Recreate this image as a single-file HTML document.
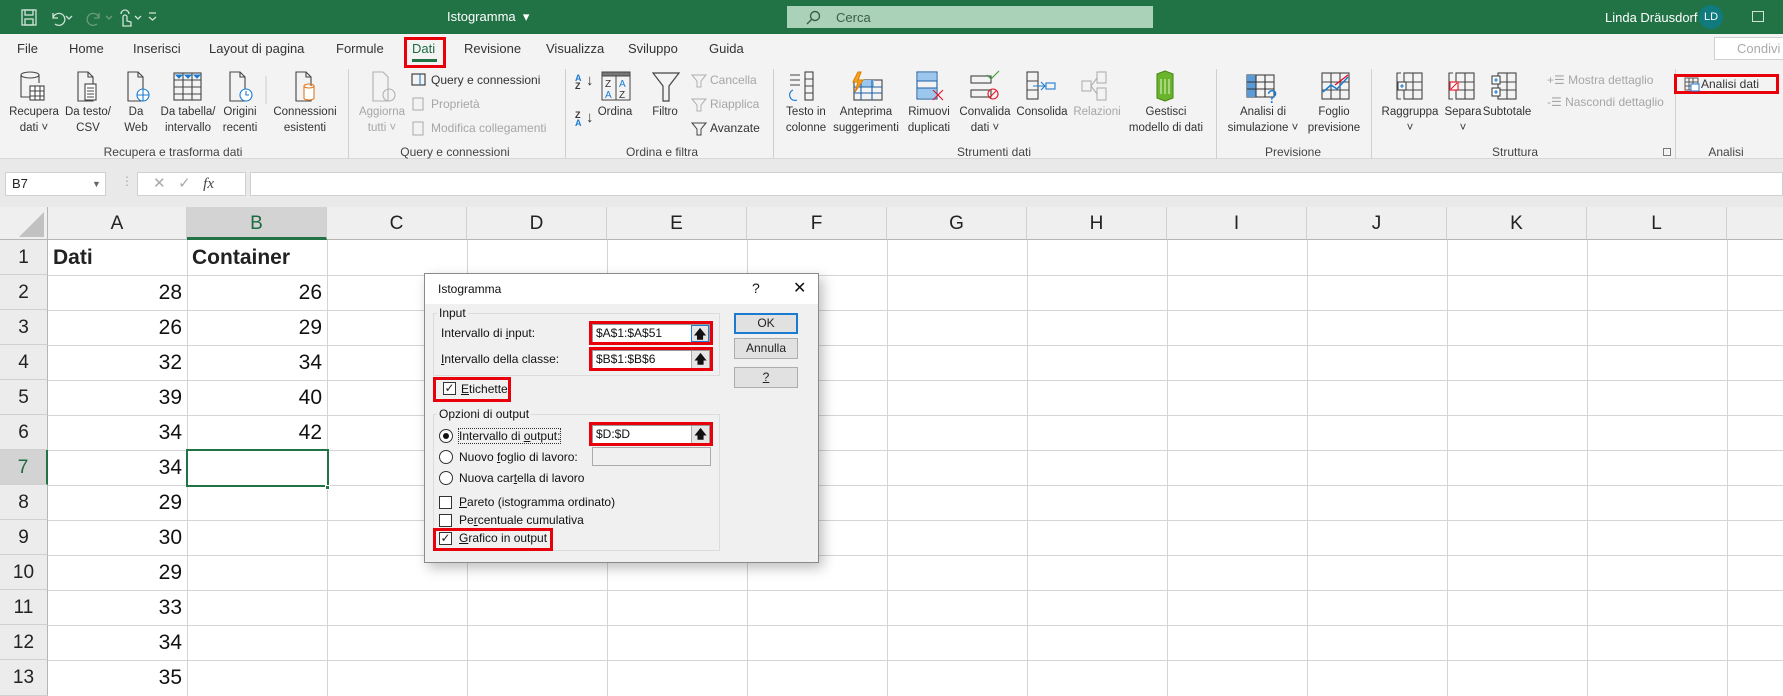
<!DOCTYPE html>
<html><head><meta charset="utf-8"><style>
*{margin:0;padding:0;box-sizing:border-box}
body{width:1783px;height:696px;overflow:hidden;position:relative;background:#fff;font-family:"Liberation Sans",sans-serif;color:#222}
.a{position:absolute;white-space:nowrap}
.tb{background:#217346;left:0;top:0;width:1783px;height:34px}
.tab{font-size:13px;color:#333;top:41px}
.rib{background:#f3f3f3;left:0;top:34px;width:1783px;height:125px;border-bottom:1px solid #d8d8d8;box-shadow:0 2px 3px rgba(0,0,0,.12)}
.lbl{font-size:11.5px;text-align:center;line-height:16px;color:#333;top:104px;transform:translateX(-50%)}
.grp{font-size:12px;color:#444;top:145px;transform:translateX(-50%)}
.sep{width:1px;background:#d0d0d0;top:69px;height:90px}
.sm{font-size:12px;color:#333}
.g{color:#a6a6a6}
.ico{position:absolute}
.fb{left:0;top:159px;width:1783px;height:48px;background:#e9e9e9}
.ch{top:207px;height:33px;background:#efefef;border-right:1px solid #d0d0d0;border-bottom:1px solid #b5b5b5;font-size:19px;text-align:center;line-height:33px;color:#222}
.rh{left:0;width:48px;height:35px;background:#ececec;border-bottom:1px solid #d0d0d0;border-right:1px solid #b5b5b5;font-size:19px;text-align:center;line-height:35px;color:#222}
.vl{top:240px;width:1px;height:456px;background:#d4d4d4}
.hl{left:48px;width:1735px;height:1px;background:#d4d4d4}
.num{font-size:21px;text-align:right;width:130px;line-height:35px;color:#111}
.dlg{left:424px;top:273px;width:395px;height:290px;background:#f0f0f0;border:1px solid #8a8a8a;box-shadow:4px 5px 12px rgba(0,0,0,.25)}
.d{font-size:12px;color:#111;position:absolute;white-space:nowrap}
.rb{position:absolute;border:3px solid #e8000b}
.fld{position:absolute;background:#fff;border:1px solid #999;height:19px;font-size:12px;line-height:17px;padding-left:3px;color:#111}
.up{position:absolute;right:0;top:0;width:18px;height:17px;background:#e5e5e5;border-left:1px solid #aaa;font-size:12px;text-align:center;line-height:17px;font-weight:bold}
.cb{position:absolute;width:13px;height:13px;border:1px solid #333;background:#fff;font-size:12px;line-height:11px;text-align:center}
.rd{position:absolute;width:14px;height:14px;border:1px solid #333;border-radius:50%;background:#fff}
.btn{position:absolute;width:64px;height:21px;background:#e1e1e1;border:1px solid #adadad;font-size:12px;text-align:center;line-height:19px}
.gb{position:absolute;border:1px solid #dcdcdc}
u{text-decoration:underline}
</style></head><body>
<div class="a tb"></div>
<svg class="ico" style="left:20px;top:8px" width="150" height="20" fill="none" stroke="#cfe3d6" stroke-width="1.3">
<rect x="2" y="2" width="14" height="15"/><rect x="5" y="2" width="8" height="5"/><rect x="5" y="11" width="8" height="6"/>
<path d="M33 5 v5 h5 M33 10 a6 6 0 1 1 2 6"/><path d="M46 8 l3 3 l3 -3"/>
<path d="M79 5 v5 h-5 M79 10 a6 6 0 1 0 -2 6" stroke="#6c9b7e"/><path d="M86 8 l3 3 l3 -3" stroke="#6c9b7e"/>
<path d="M103 18 v-9 a2 2 0 0 1 4 0 v4 l4 1 v4z M101 6 a4 4 0 0 1 8 0"/><path d="M115 8 l3 3 l3 -3"/>
<path d="M129 5 h7 M129 9 l3.5 3 l3.5 -3"/></svg>
<div class="a" style="left:447px;top:9px;font-size:13px;color:#fff">Istogramma &nbsp;▾</div>
<div class="a" style="left:787px;top:6px;width:366px;height:22px;background:#a9d2b8"></div>
<svg class="ico" style="left:806px;top:10px" width="16" height="16" fill="none" stroke="#3b5e48" stroke-width="1.4"><circle cx="9" cy="6" r="4.5"/><path d="M6 9 l-5 5"/></svg>
<div class="a" style="left:836px;top:10px;font-size:13px;color:#3b5e48">Cerca</div>
<div class="a" style="left:1605px;top:10px;font-size:13px;color:#fff">Linda Dräusdorf</div>
<div class="a" style="left:1699px;top:5px;width:24px;height:24px;border-radius:50%;background:#0f7b7e;color:#fff;font-size:11px;text-align:center;line-height:24px">LD</div>
<div class="a" style="left:1752px;top:11px;width:12px;height:11px;border:1px solid #cfe3d6"></div>

<div class="a rib"></div>
<div class="a tab" style="left:17px">File</div>
<div class="a tab" style="left:69px">Home</div>
<div class="a tab" style="left:133px">Inserisci</div>
<div class="a tab" style="left:209px">Layout di pagina</div>
<div class="a tab" style="left:336px">Formule</div>
<div class="a tab" style="left:412px;color:#1e6b41">Dati</div>
<div class="a" style="left:412px;top:59px;width:25px;height:3px;background:#217346"></div>
<div class="rb" style="left:404px;top:37px;width:42px;height:31px"></div>
<div class="a tab" style="left:464px">Revisione</div>
<div class="a tab" style="left:546px">Visualizza</div>
<div class="a tab" style="left:628px">Sviluppo</div>
<div class="a tab" style="left:709px">Guida</div>
<div class="a" style="left:1714px;top:37px;width:75px;height:23px;border:1px solid #d0d0d0;background:#fff;font-size:13px;color:#aaa;line-height:21px;padding-left:22px">Condivi</div>

<svg class="ico" style="left:0;top:70px" width="360" height="34" fill="none" stroke="#444" stroke-width="1.1">
<ellipse cx="30" cy="5" rx="9" ry="3"/><path d="M21 5 v22 h9 M39 5 v8"/><rect x="30" y="16" width="14" height="14" fill="#fff"/><path d="M30 21 h14 M30 26 h14 M35 16 v14 M40 16 v14"/>
<path d="M78 2 h10 l5 5 v24 h-15z M88 2 v5 h5"/><rect x="85" y="14" width="11" height="16" fill="#fff"/><path d="M87 18 h7 M87 21 h7 M87 24 h7 M87 27 h7"/>
<path d="M128 2 h10 l5 5 v24 h-15z M138 2 v5 h5"/><circle cx="143" cy="25" r="6" fill="#fff" stroke="#1b7bd1"/><path d="M137 25 h12 M143 19 v12" stroke="#1b7bd1"/>
<rect x="174" y="3" width="27" height="27"/><path d="M174 10 h27 M174 17 h27 M174 24 h27 M183 3 v27 M192 3 v27"/><path d="M176 5 l3 3 l3-3z M185 5 l3 3 l3-3z M194 5 l3 3 l3-3z" fill="#1b7bd1" stroke="#1b7bd1"/>
<path d="M230 2 h10 l5 5 v24 h-15z M240 2 v5 h5"/><circle cx="246" cy="25" r="6" fill="#fff" stroke="#1b7bd1"/><path d="M246 21 v4 h3" stroke="#1b7bd1"/>
<path d="M266 6 v40" stroke="#d0d0d0"/>
<path d="M296 2 h10 l5 5 v24 h-15z M306 2 v5 h5"/><path d="M304 16 v12 a5 2 0 0 0 10 0 v-12" fill="#fff" stroke="#e3781f"/><ellipse cx="309" cy="16" rx="5" ry="2" stroke="#e3781f"/>
</svg>
<div class="a lbl" style="left:34px">Recupera<br>dati ˅</div>
<div class="a lbl" style="left:88px">Da testo/<br>CSV</div>
<div class="a lbl" style="left:136px">Da<br>Web</div>
<div class="a lbl" style="left:188px">Da tabella/<br>intervallo</div>
<div class="a lbl" style="left:240px">Origini<br>recenti</div>
<div class="a lbl" style="left:305px">Connessioni<br>esistenti</div>
<div class="a grp" style="left:173px">Recupera e trasforma dati</div>
<div class="a sep" style="left:348px"></div>
<svg class="ico" style="left:370px;top:70px" width="60" height="68" fill="none" stroke="#b0b0b0" stroke-width="1.1">
<path d="M3 2 h10 l5 5 v24 h-15z"/><circle cx="19" cy="25" r="6"/>
<rect x="42" y="4" width="13" height="11" stroke="#333"/><path d="M50 4 v11" stroke="#1b7bd1"/>
<rect x="43" y="28" width="10" height="12"/><rect x="43" y="52" width="10" height="13"/></svg>
<div class="a lbl g" style="left:382px">Aggiorna<br>tutti ˅</div>
<div class="a sm" style="left:431px;top:73px">Query e connessioni</div>
<div class="a sm g" style="left:431px;top:97px">Proprietà</div>
<div class="a sm g" style="left:431px;top:121px">Modifica collegamenti</div>
<div class="a grp" style="left:455px">Query e connessioni</div>
<div class="a sep" style="left:565px"></div>
<div class="a" style="left:575px;top:74px;font-size:9px;line-height:8px;color:#1b7bd1;font-weight:bold">A<br><span style="color:#333">Z</span></div>
<div class="a" style="left:586px;top:72px;font-size:15px;color:#333">↓</div>
<div class="a" style="left:575px;top:111px;font-size:9px;line-height:8px;color:#333;font-weight:bold">Z<br><span style="color:#1b7bd1">A</span></div>
<div class="a" style="left:586px;top:109px;font-size:15px;color:#333">↓</div>
<svg class="ico" style="left:601px;top:71px" width="30" height="30" fill="none" stroke="#444"><rect x="1" y="1" width="28" height="28"/><rect x="1" y="1" width="28" height="4" fill="#777"/><path d="M15 5 v24"/><text x="4" y="16" font-size="10" fill="#333" stroke="none" font-family="Liberation Sans">Z</text><text x="18" y="16" font-size="10" fill="#1b7bd1" stroke="none" font-family="Liberation Sans">A</text><text x="4" y="27" font-size="10" fill="#1b7bd1" stroke="none" font-family="Liberation Sans">A</text><text x="18" y="27" font-size="10" fill="#333" stroke="none" font-family="Liberation Sans">Z</text></svg>
<div class="a lbl" style="left:615px">Ordina</div>
<svg class="ico" style="left:652px;top:72px" width="30" height="30" fill="none" stroke="#444" stroke-width="1.2"><path d="M1 1 h26 l-10 13 v15 h-6 v-15z"/></svg>
<div class="a lbl" style="left:665px">Filtro</div>
<svg class="ico" style="left:691px;top:74px" width="18" height="64" fill="none" stroke="#b0b0b0"><path d="M1 1 h14 l-5 6 v6 h-4 v-6z M1 25 h14 l-5 6 v6 h-4 v-6z"/><path d="M1 49 h14 l-5 6 v6 h-4 v-6z" stroke="#444"/></svg>
<div class="a sm g" style="left:710px;top:73px">Cancella</div>
<div class="a sm g" style="left:710px;top:97px">Riapplica</div>
<div class="a sm" style="left:710px;top:121px">Avanzate</div>
<div class="a grp" style="left:662px">Ordina e filtra</div>
<div class="a sep" style="left:773px"></div>
<svg class="ico" style="left:785px;top:70px" width="420" height="34" fill="none" stroke="#444" stroke-width="1.1">
<path d="M5 5 h10 M5 10 h10 M5 15 h10" /><rect x="20" y="2" width="8" height="28"/><path d="M20 9 h8 M20 16 h8 M20 23 h8"/><path d="M8 20 a5 5 0 0 0 4 10" stroke="#1b7bd1"/>
<rect x="69" y="10" width="28" height="20"/><rect x="76" y="10" width="13" height="7" fill="#9bc7ef" stroke="none"/><path d="M69 17 h28 M69 23 h28 M76 10 v20 M87 10 v20" stroke="#1b5fa8"/><path d="M73 2 l-5 10 h5 l-3 10 l8 -12 h-5 l3 -8z" fill="#f5a623" stroke="#e07e00"/>
<rect x="132" y="2" width="20" height="27" stroke="#1b5fa8"/><rect x="133" y="3" width="18" height="8" fill="#9bc7ef" stroke="none"/><rect x="133" y="18" width="18" height="10" fill="#9bc7ef" stroke="none"/><path d="M132 11 h20 M132 18 h20" stroke="#1b5fa8"/><path d="M148 20 l10 10 M158 20 l-10 10" stroke="#e81123"/>
<rect x="186" y="6" width="20" height="7"/><rect x="186" y="20" width="20" height="7"/><path d="M202 5 l4 4 l8 -8" stroke="#3a9a3a"/><circle cx="208" cy="24" r="5" stroke="#e81123"/><path d="M205 27 l6 -6" stroke="#e81123"/>
<rect x="242" y="2" width="11" height="27"/><path d="M242 11 h11 M242 20 h11"/><path d="M248 16 h12 M256 12 l4 4 l-4 4" stroke="#1b7bd1"/><rect x="261" y="13" width="9" height="6" stroke="#1b7bd1"/>
<g stroke="#b0b0b0"><rect x="297" y="11" width="9" height="10"/><rect x="312" y="2" width="9" height="11"/><rect x="312" y="18" width="9" height="12"/><path d="M306 16 l6 -8 M306 16 l6 8"/></g>
<path d="M372 4 l8 -3 l8 3 v24 l-8 3 l-8 -3z" fill="#6ab42d" stroke="#4b8a1d"/><path d="M376 9 v15 M380 9 v15 M384 9 v15" stroke="#d9f0c4"/>
</svg>
<div class="a lbl" style="left:806px">Testo in<br>colonne</div>
<div class="a lbl" style="left:866px">Anteprima<br>suggerimenti</div>
<div class="a lbl" style="left:929px">Rimuovi<br>duplicati</div>
<div class="a lbl" style="left:985px">Convalida<br>dati ˅</div>
<div class="a lbl" style="left:1042px">Consolida</div>
<div class="a lbl g" style="left:1097px">Relazioni</div>
<div class="a lbl" style="left:1166px">Gestisci<br>modello di dati</div>
<div class="a grp" style="left:994px">Strumenti dati</div>
<div class="a sep" style="left:1216px"></div>
<svg class="ico" style="left:1245px;top:70px" width="110" height="34" fill="none" stroke="#444" stroke-width="1.1">
<rect x="2" y="5" width="27" height="22"/><rect x="2" y="5" width="9" height="22" fill="#5b9bd5" stroke="none"/><path d="M2 12 h27 M2 19 h27 M11 5 v22 M20 5 v22" stroke="#333"/><text x="22" y="33" font-size="18" fill="#1b7bd1" stroke="none" font-family="Liberation Sans">?</text>
<rect x="77" y="3" width="27" height="26"/><path d="M77 12 h27 M77 20 h27 M86 3 v26 M95 3 v26"/><path d="M78 22 l8 -7 l6 4 l11 -12" stroke="#1b7bd1" stroke-width="1.5"/><path d="M90 15 l13 -10" stroke="#e81123" stroke-width="1.4"/></svg>
<div class="a lbl" style="left:1263px">Analisi di<br>simulazione ˅</div>
<div class="a lbl" style="left:1334px">Foglio<br>previsione</div>
<div class="a grp" style="left:1293px">Previsione</div>
<div class="a sep" style="left:1371px"></div>
<svg class="ico" style="left:1395px;top:72px" width="125" height="30" fill="none" stroke="#444" stroke-width="1.1">
<path d="M6 1 h-4 v26 h4"/><rect x="9" y="1" width="18" height="26"/><path d="M18 1 v26 M9 10 h18 M9 18 h18"/><rect x="3" y="10" width="8" height="8" fill="#fff"/><path d="M5 14 h4 M7 12 v4" stroke="#1b7bd1"/>
<path d="M58 1 h-4 v26 h4"/><rect x="61" y="1" width="18" height="26"/><path d="M70 1 v26 M61 10 h18 M61 18 h18"/><rect x="55" y="10" width="8" height="8" fill="#fff" stroke="#e81123"/><path d="M56 17 l6 -6" stroke="#e81123"/>
<rect x="103" y="1" width="18" height="26"/><path d="M112 1 v26 M103 10 h18 M103 18 h18"/><rect x="97" y="4" width="8" height="8" fill="#fff"/><rect x="97" y="16" width="8" height="8" fill="#fff"/><path d="M99 8 h4 M101 6 v4 M99 20 h4 M101 18 v4" stroke="#1b7bd1"/></svg>
<div class="a lbl" style="left:1410px">Raggruppa<br>˅</div>
<div class="a lbl" style="left:1463px">Separa<br>˅</div>
<div class="a lbl" style="left:1507px">Subtotale</div>
<div class="a sm g" style="left:1547px;top:73px">+☰ Mostra dettaglio</div>
<div class="a sm g" style="left:1547px;top:95px">-☰ Nascondi dettaglio</div>
<div class="a grp" style="left:1515px">Struttura</div>
<div class="a" style="left:1663px;top:148px;width:8px;height:8px;border:1px solid #777"></div>
<div class="a sep" style="left:1675px"></div>
<div class="rb" style="left:1674px;top:74px;width:105px;height:20px"></div>
<svg class="ico" style="left:1684px;top:77px" width="16" height="15" fill="none" stroke="#555"><rect x="1" y="1" width="13" height="12"/><path d="M1 5 h13 M1 9 h13 M5 1 v12 M9 1 v12"/><rect x="7" y="7" width="8" height="7" fill="#fff" stroke="#1b7bd1"/></svg>
<div class="a sm" style="left:1701px;top:77px">Analisi dati</div>
<div class="a grp" style="left:1726px">Analisi</div>

<div class="a fb"></div>
<div class="a" style="left:5px;top:172px;width:101px;height:24px;background:#fff;border:1px solid #d0d0d0;font-size:13px;line-height:22px;padding-left:6px">B7<span style="position:absolute;left:86px;top:0;font-size:9px;color:#666">▼</span></div>
<div class="a" style="left:121px;top:174px;font-size:12px;color:#aaa">⋮</div>
<div class="a" style="left:137px;top:172px;width:109px;height:24px;background:#fff;border:1px solid #d0d0d0;font-size:15px;line-height:22px;color:#aaa;padding-left:15px">✕ &nbsp; ✓ &nbsp; <i style="color:#444;font-family:'Liberation Serif',serif">fx</i></div>
<div class="a" style="left:250px;top:172px;width:1533px;height:24px;background:#fff;border:1px solid #d0d0d0"></div>

<div class="a" style="left:0;top:207px;width:48px;height:33px;background:#efefef;border-right:1px solid #b5b5b5;border-bottom:1px solid #b5b5b5"></div>
<svg class="ico" style="left:18px;top:211px" width="27" height="27"><path d="M26 1 v25 h-25z" fill="#c1c1c1"/></svg>
<div class="a ch" style="left:48px;width:139px">A</div>
<div class="a ch" style="left:187px;width:140px;background:#d3d3d3;color:#1e6b41;border-bottom:3px solid #217346">B</div>
<div class="a ch" style="left:327px;width:140px">C</div>
<div class="a ch" style="left:467px;width:140px">D</div>
<div class="a ch" style="left:607px;width:140px">E</div>
<div class="a ch" style="left:747px;width:140px">F</div>
<div class="a ch" style="left:887px;width:140px">G</div>
<div class="a ch" style="left:1027px;width:140px">H</div>
<div class="a ch" style="left:1167px;width:140px">I</div>
<div class="a ch" style="left:1307px;width:140px">J</div>
<div class="a ch" style="left:1447px;width:140px">K</div>
<div class="a ch" style="left:1587px;width:140px">L</div>
<div class="a ch" style="left:1727px;width:56px;border-right:none"></div>

<div class="a vl" style="left:187px"></div><div class="a vl" style="left:327px"></div><div class="a vl" style="left:467px"></div><div class="a vl" style="left:607px"></div><div class="a vl" style="left:747px"></div><div class="a vl" style="left:887px"></div><div class="a vl" style="left:1027px"></div><div class="a vl" style="left:1167px"></div><div class="a vl" style="left:1307px"></div><div class="a vl" style="left:1447px"></div><div class="a vl" style="left:1587px"></div><div class="a vl" style="left:1727px"></div>
<div class="a hl" style="top:275px"></div><div class="a hl" style="top:310px"></div><div class="a hl" style="top:345px"></div><div class="a hl" style="top:380px"></div><div class="a hl" style="top:415px"></div><div class="a hl" style="top:450px"></div><div class="a hl" style="top:485px"></div><div class="a hl" style="top:520px"></div><div class="a hl" style="top:555px"></div><div class="a hl" style="top:590px"></div><div class="a hl" style="top:625px"></div><div class="a hl" style="top:660px"></div>

<div class="a rh" style="top:240px">1</div><div class="a rh" style="top:275px">2</div><div class="a rh" style="top:310px">3</div><div class="a rh" style="top:345px">4</div><div class="a rh" style="top:380px">5</div><div class="a rh" style="top:415px">6</div>
<div class="a rh" style="top:450px;background:#d3d3d3;color:#1e6b41;border-right:2px solid #217346">7</div>
<div class="a rh" style="top:485px">8</div><div class="a rh" style="top:520px">9</div><div class="a rh" style="top:555px">10</div><div class="a rh" style="top:590px">11</div><div class="a rh" style="top:625px">12</div><div class="a rh" style="top:660px;height:36px">13</div>

<div class="a" style="left:53px;top:240px;font-size:21px;font-weight:bold;line-height:35px">Dati</div>
<div class="a" style="left:192px;top:240px;font-size:21px;font-weight:bold;line-height:35px">Container</div>
<div class="a num" style="left:52px;top:275px">28</div><div class="a num" style="left:52px;top:310px">26</div><div class="a num" style="left:52px;top:345px">32</div><div class="a num" style="left:52px;top:380px">39</div><div class="a num" style="left:52px;top:415px">34</div><div class="a num" style="left:52px;top:450px">34</div><div class="a num" style="left:52px;top:485px">29</div><div class="a num" style="left:52px;top:520px">30</div><div class="a num" style="left:52px;top:555px">29</div><div class="a num" style="left:52px;top:590px">33</div><div class="a num" style="left:52px;top:625px">34</div><div class="a num" style="left:52px;top:660px">35</div>
<div class="a num" style="left:192px;top:275px">26</div><div class="a num" style="left:192px;top:310px">29</div><div class="a num" style="left:192px;top:345px">34</div><div class="a num" style="left:192px;top:380px">40</div><div class="a num" style="left:192px;top:415px">42</div>
<div class="a" style="left:186px;top:449px;width:143px;height:38px;border:2px solid #217346"></div>
<div class="a" style="left:325px;top:485px;width:5px;height:5px;background:#217346;border:1px solid #fff"></div>

<div class="a dlg">
<div style="position:absolute;left:0;top:0;width:393px;height:30px;background:#fff"></div>
<div class="d" style="left:13px;top:8px">Istogramma</div>
<div class="d" style="left:327px;top:6px;font-size:14px">?</div>
<div class="d" style="left:368px;top:4px;font-size:16px">✕</div>
<div class="gb" style="left:8px;top:39px;width:287px;height:63px"></div>
<div class="d" style="left:12px;top:32px;background:#f0f0f0;padding:0 2px">Input</div>
<div class="d" style="left:16px;top:52px">Intervallo di <u>i</u>nput:</div>
<div class="d" style="left:16px;top:78px"><u>I</u>ntervallo della classe:</div>
<div class="fld" style="left:167px;top:50px;width:118px">$A$1:$A$51<div class="up" style="border:1px solid #1b7bd1">🡅</div></div>
<div class="rb" style="left:164px;top:47px;width:124px;height:24px"></div>
<div class="fld" style="left:167px;top:76px;width:118px">$B$1:$B$6<div class="up">🡅</div></div>
<div class="rb" style="left:164px;top:73px;width:124px;height:24px"></div>
<div class="cb" style="left:18px;top:108px">✓</div>
<div class="d" style="left:36px;top:108px"><u>E</u>tichette</div>
<div class="rb" style="left:8px;top:103px;width:78px;height:25px"></div>
<div class="gb" style="left:8px;top:140px;width:287px;height:137px"></div>
<div class="d" style="left:12px;top:133px;background:#f0f0f0;padding:0 2px">Opzioni di output</div>
<div class="rd" style="left:14px;top:155px"><div style="position:absolute;left:3px;top:3px;width:6px;height:6px;border-radius:50%;background:#111"></div></div>
<div class="d" style="left:34px;top:155px;outline:1px dotted #333">Intervallo di <u>o</u>utput:</div>
<div class="fld" style="left:167px;top:151px;width:118px">$D:$D<div class="up">🡅</div></div>
<div class="rb" style="left:164px;top:148px;width:124px;height:24px"></div>
<div class="fld" style="left:167px;top:173px;width:119px;background:#f0f0f0;border-color:#aaa"></div>
<div class="rd" style="left:14px;top:176px"></div>
<div class="d" style="left:34px;top:176px">Nuovo <u>f</u>oglio di lavoro:</div>
<div class="rd" style="left:14px;top:197px"></div>
<div class="d" style="left:34px;top:197px">Nuova car<u>t</u>ella di lavoro</div>
<div class="cb" style="left:14px;top:222px"></div>
<div class="d" style="left:34px;top:221px"><u>P</u>areto (istogramma ordinato)</div>
<div class="cb" style="left:14px;top:240px"></div>
<div class="d" style="left:34px;top:239px">Pe<u>r</u>centuale cumulativa</div>
<div class="cb" style="left:14px;top:258px">✓</div>
<div class="d" style="left:34px;top:257px"><u>G</u>rafico in output</div>
<div class="rb" style="left:8px;top:254px;width:120px;height:23px"></div>
<div class="btn" style="left:309px;top:39px;border:2px solid #1b7bd1;line-height:17px">OK</div>
<div class="btn" style="left:309px;top:64px">Annulla</div>
<div class="btn" style="left:309px;top:93px"><u>?</u></div>
</div>
</body></html>
